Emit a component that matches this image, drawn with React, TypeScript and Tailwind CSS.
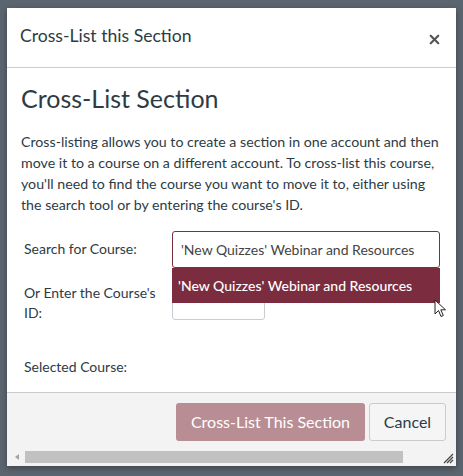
import { X } from 'lucide-react'

export default function App() {
  return (
    <div
      className="w-[463px] h-[476px] bg-[#5b6570] pt-[8px] pl-[7px]"
      style={{ fontFamily: 'Lato, "Open Sans", sans-serif' }}
    >
      <div className="w-[449px] h-[458px] bg-white flex flex-col text-[#2d3b45] shadow-[0_2px_6px_rgba(0,0,0,0.35)]">
        {/* header */}
        <div className="h-[60px] flex items-center justify-between pl-[13px] pr-[14px] border-b border-[#c7cdd1] shrink-0">
          <span className="text-[17.6px] leading-none -mt-[3px]">Cross-List this Section</span>
          <X size={15} strokeWidth={3.5} className="text-[#555] mt-[4px]" />
        </div>

        {/* body */}
        <div className="flex-1 pl-[14px] pr-[4px] pt-[13px]">
          <h2 className="text-[25px] leading-[34px] font-normal">Cross-List Section</h2>
          <p className="mt-[16px] text-[14.2px] leading-[21px] whitespace-nowrap">
            Cross-listing allows you to create a section in one account and then
            <br />
            move it to a course on a different account. To cross-list this course,
            <br />
            you'll need to find the course you want to move it to, either using
            <br />
            the search tool or by entering the course's ID.
          </p>

          <div className="mt-[16px] pl-[3px] grid grid-cols-[148px_1fr] text-[14px] leading-[20px]">
            <div className="pt-[8px]">Search for Course:</div>
            <div className="relative">
              <div className="w-[268px] h-[37px] border border-[#7a2e40] rounded-[3px] px-[8px] flex items-center text-[14px] text-[#444] whitespace-nowrap">
                'New Quizzes' Webinar and Resources
              </div>
              <div className="absolute left-0 top-[37px] w-[268px] h-[35px] bg-[#7b2d3f] text-white text-[14px] font-medium flex items-center px-[6px] z-10 whitespace-nowrap">
                'New Quizzes' Webinar and Resources
              </div>
              <svg
                className="absolute left-[262px] top-[68px] z-20"
                width="14"
                height="20"
                viewBox="0 0 14 20"
              >
                <path d="M1 1 L1 15 L4.5 11.5 L7 17.5 L9.3 16.5 L6.8 10.8 L11.5 10.8 Z" fill="white" stroke="#222" strokeWidth="1" strokeLinejoin="round" />
              </svg>
            </div>

            <div className="mt-[15px]">
              Or Enter the Course's
              <br />
              ID:
            </div>
            <div className="mt-[15px]">
              <div className="w-[93px] h-[37px] border border-[#c7cdd1] rounded-[3px]" />
            </div>

            <div className="mt-[34px]">Selected Course:</div>
            <div />
          </div>
        </div>

        {/* footer */}
        <div className="bg-[#f3f3f3] border-t border-[#c7cdd1] shrink-0">
          <div className="flex justify-end gap-[4px] pt-[10px] pr-[10px]">
            <button className="w-[189px] h-[38px] rounded-[3px] bg-[#b98d94] text-white text-[16px]">
              Cross-List This Section
            </button>
            <button className="w-[77px] h-[38px] rounded-[3px] bg-[#f5f5f5] border border-[#c7cdd1] text-[#2d3b45] text-[16px]">
              Cancel
            </button>
          </div>
          <div className="h-[24px] flex items-center pl-[5px] pr-[2px] mt-[1px] pt-[5px]">
            <svg width="10" height="10" viewBox="0 0 10 10" className="mr-[3px]">
              <path d="M7 2 L3 5 L7 8 Z" fill="#a3a3a3" />
            </svg>
            <div className="w-[378px] h-[12px] bg-[#c1c1c1]" />
            <div className="flex-1" />
            <svg width="12" height="12" viewBox="0 0 12 12" className="mt-[2px]">
              <path d="M11 2 L2 11 M11 5 L5 11 M11 8 L8 11" stroke="#444" strokeWidth="1.2" />
            </svg>
          </div>
        </div>
      </div>
    </div>
  )
}
